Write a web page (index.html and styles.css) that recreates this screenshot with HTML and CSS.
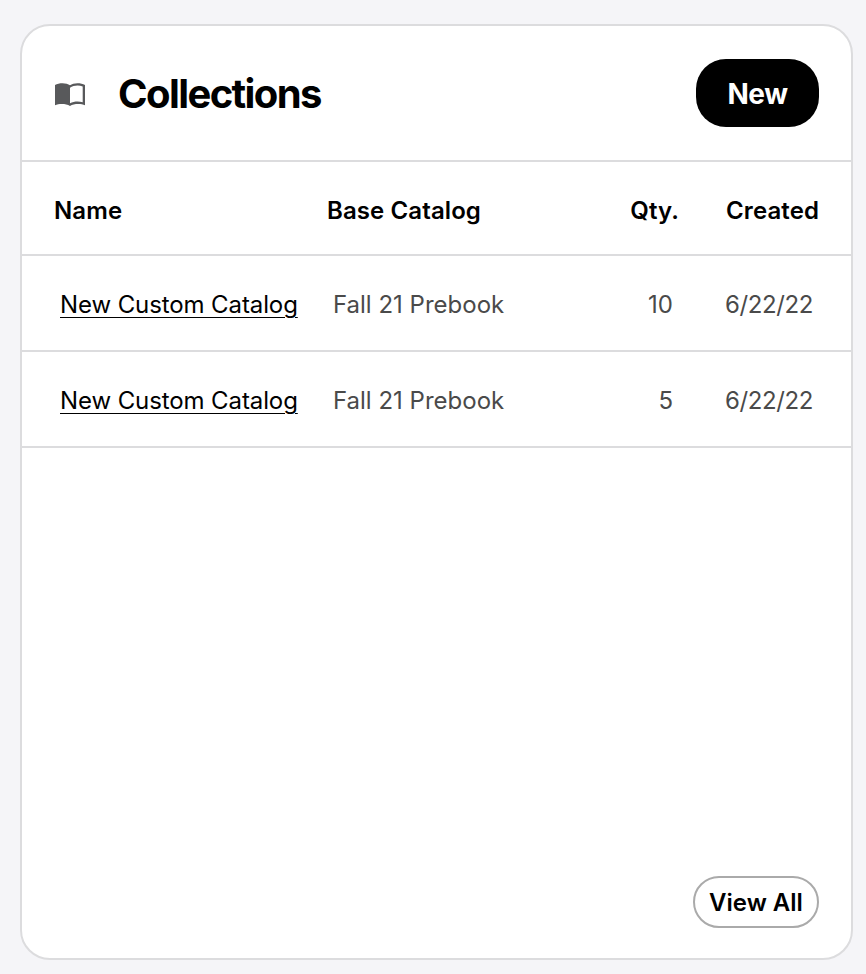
FILE: index.html
```html
<!DOCTYPE html>
<html lang="en">
<head>
    <meta charset="UTF-8">
    <meta name="viewport" content="width=device-width, initial-scale=1.0">
    <title>Collections</title>
    <link rel="stylesheet" href="styles.css">
</head>
<body>
    <section class="card">
        <header class="card-header">
            <svg class="card-icon" width="30" height="26" viewBox="0 0 30 26">
                <path d="M0 4C4 1.500 11.500 1.500 15 4.200 18.500 1.500 26 1.500 30 4V24.300C26 22.500 19 22.500 15 25 11 22.500 4 22.500 0 24.300z" fill="#58595b"/>
                <path d="M15 6.800C18.500 4.300 23.500 4 27.700 5.400V21.200C23.500 20.100 18.500 20.400 15 22.200z" fill="#fff"/>
            </svg>
            <h2 class="card-title">Collections</h2>
            <button class="btn-new">New</button>
        </header>

        <table class="collections">
            <thead>
                <tr>
                    <th class="col-name">Name</th>
                    <th class="col-base">Base Catalog</th>
                    <th class="col-qty">Qty.</th>
                    <th class="col-created">Created</th>
                </tr>
            </thead>
            <tbody>
                <tr>
                    <td class="col-name"><a class="link" href="#">New Custom Catalog</a></td>
                    <td class="col-base">Fall 21 Prebook</td>
                    <td class="col-qty">10</td>
                    <td class="col-created">6/22/22</td>
                </tr>
                <tr>
                    <td class="col-name"><a class="link" href="#">New Custom Catalog</a></td>
                    <td class="col-base">Fall 21 Prebook</td>
                    <td class="col-qty">5</td>
                    <td class="col-created">6/22/22</td>
                </tr>
            </tbody>
        </table>

        <footer class="card-footer">
            <button class="btn-view">View All</button>
        </footer>
    </section>
</body>
</html>
```
FILE: styles.css
```css
* {
    box-sizing: border-box;
}

body {
    margin: 0;
    height: 974px;
    padding: 24px 13px 14px 20px;
    background: #f5f5f8;
    font-family: Inter, "Liberation Sans", sans-serif;
    color: #000;
}

.card {
    display: flex;
    flex-direction: column;
    height: 936px;
    background: #fff;
    border: 2px solid #dcdcde;
    border-radius: 30px;
}

.card-header {
    display: flex;
    align-items: center;
    height: 136px;
    padding: 0 32px 0 33px;
    border-bottom: 2px solid #dcdcde;
}

.card-icon {
    margin-top: 2px;
}

.card-title {
    margin: 0 auto 0 33px;
    font-size: 40px;
    font-weight: 650;
    letter-spacing: -1.6px;
}

.btn-new {
    width: 123px;
    height: 68px;
    padding: 2px 0 0;
    border: none;
    border-radius: 30px;
    background: #000;
    color: #fff;
    font: 650 28px Inter, sans-serif;
    letter-spacing: -0.4px;
}

.collections {
    width: 100%;
    table-layout: fixed;
    border-collapse: separate;
    border-spacing: 0;
    font-size: 24px;
}

.collections th {
    height: 94px;
    padding: 4px 0 0;
    font-weight: 600;
    text-align: left;
    letter-spacing: 0.1px;
    border-bottom: 2px solid #dcdcde;
}

.collections td {
    height: 96px;
    padding: 2px 6px 0;
    color: #4a4a4a;
    border-bottom: 2px solid #dcdcde;
}

.collections .col-name {
    width: 305px;
    padding-left: 32px;
}

.collections td.col-name {
    padding-left: 38px;
    letter-spacing: -0.1px;
}

.collections .col-base {
    width: 240px;
}

.collections .col-qty {
    width: 112px;
    text-align: right;
}

.collections .col-created {
    padding-right: 32px;
    text-align: right;
}

.collections td.col-created {
    padding-right: 38px;
    letter-spacing: -0.4px;
}

.link {
    color: #000;
    text-decoration: underline;
    text-decoration-thickness: 1px;
    text-underline-offset: 4px;
}

.card-footer {
    display: flex;
    justify-content: flex-end;
    margin-top: auto;
    padding: 0 32px 30px;
}

.btn-view {
    width: 126px;
    height: 52px;
    padding: 0;
    border: 2px solid #aaa;
    border-radius: 26px;
    background: #fff;
    color: #000;
    font: 600 24px Inter, sans-serif;
}
```
